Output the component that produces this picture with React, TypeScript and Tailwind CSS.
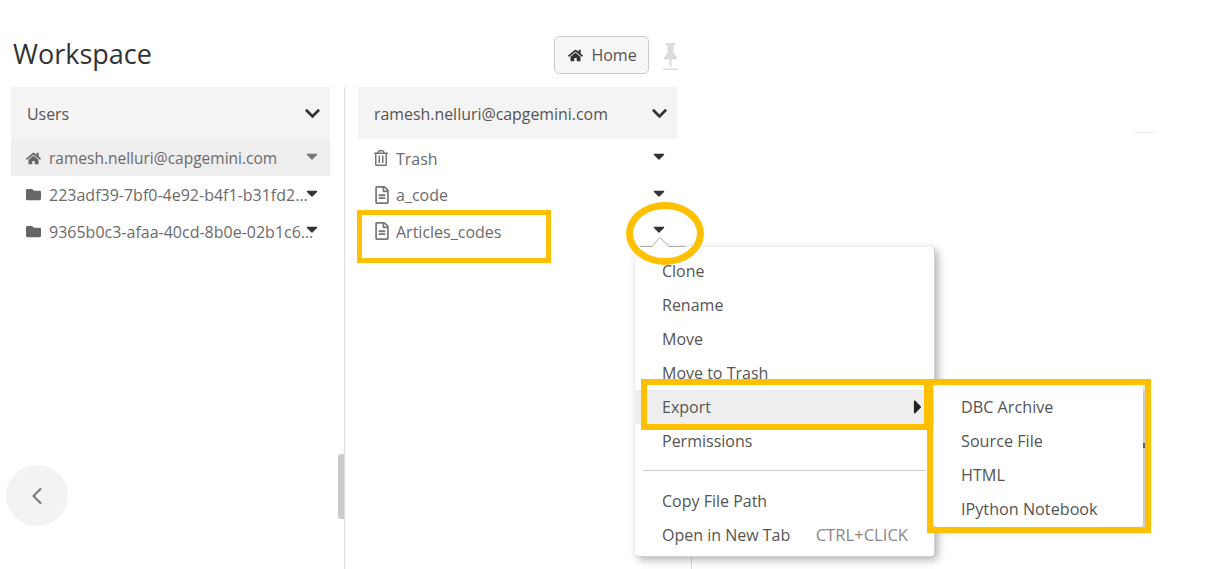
import { ChevronLeft } from "lucide-react";
import {
  FaCaretDown,
  FaCaretRight,
  FaChevronDown,
  FaFolder,
  FaHome,
  FaRegFileAlt,
  FaRegTrashAlt,
} from "react-icons/fa";

function PanelHeader({ label }: { label: string }) {
  return (
    <div className="flex h-[52px] items-center justify-between bg-[#f4f4f4] pl-4 pr-[9px] text-[15.9px] text-[#555]">
      <span className="mt-[3px]">{label}</span>
      <FaChevronDown size={17} className="text-[#333]" />
    </div>
  );
}

function TreeRow({
  icon,
  label,
  selected,
  small,
  caretClass = "text-[#333]",
}: {
  icon: React.ReactNode;
  label: string;
  selected?: boolean;
  small?: boolean;
  caretClass?: string;
}) {
  return (
    <div
      className={`relative flex h-[36.5px] items-center pl-[15px] pr-[14px] text-[#6b6b6b] ${
        selected ? "bg-[#eeeeee]" : ""
      } ${small ? "text-[15.5px]" : "text-[16px]"}`}
    >
      <span className="mt-[2px] flex w-[23px] shrink-0 items-center">{icon}</span>
      <span className="mt-[3px] min-w-0 flex-1 truncate">{label}</span>
      <FaCaretDown size={18} className={`absolute right-[9px] top-[8px] ${caretClass}`} />
    </div>
  );
}

function MenuItem({ label, hint, active }: { label: string; hint?: string; active?: boolean }) {
  return (
    <div
      className={`flex h-[34px] items-center justify-between pl-[27px] pr-[26px] ${
        active ? "bg-[#eeeeee]" : ""
      }`}
    >
      <span>{label}</span>
      {hint && <span className="text-[16.6px] text-[#888]">{hint}</span>}
    </div>
  );
}

export default function App() {
  return (
    <div className="relative h-[569px] w-[1230px] overflow-hidden bg-white font-['Open_Sans',sans-serif] text-[#555]">
      <header className="flex h-[87px] w-[678px] items-start justify-between pl-[13px]">
        <h1 className="mt-[34px] text-[27px] leading-[40px] text-[#333]">Workspace</h1>
        <div className="mt-[36px] flex items-start gap-[14px]">
          <button className="flex h-[38px] w-[95px] items-center justify-center gap-2 rounded-[5px] border border-[#ccc] bg-[#f6f6f6] pl-[2px] text-[16px] text-[#555]">
            <FaHome size={15} className="text-[#333]" />
            Home
          </button>
          <svg width="15" height="28" viewBox="0 0 15 28" className="mt-[7px] text-[#dcdcdc]" fill="currentColor">
            <path d="M3 0H12V2.5H10.5V10L14 14.5V16.5H8.5V24H6.5V16.5H1V14.5L4.5 10V2.5H3Z" />
            <rect x="0" y="25.5" width="15" height="1.5" />
          </svg>
        </div>
      </header>

      <main className="flex h-[482px] pl-[11px]">
        <section className="w-[319px]">
          <PanelHeader label="Users" />
          <TreeRow
            selected
            small
            icon={<FaHome size={15} className="text-[#666]" />}
            label="ramesh.nelluri@capgemini.com"
            caretClass="text-[#777]"
          />
          <TreeRow icon={<FaFolder size={15} className="text-[#666]" />} label="223adf39-7bf0-4e92-b4f1-b31fd2b1c6d1" />
          <TreeRow icon={<FaFolder size={15} className="text-[#666]" />} label="9365b0c3-afaa-40cd-8b0e-02b1c6a3d9f7" />
        </section>

        <div className="relative ml-[14px] w-[1px] bg-[#ddd]">
          <div className="absolute left-[-6px] top-[367px] h-[65px] w-[6px] rounded-l-[3px] bg-[#cccccc]" />
        </div>

        <section className="ml-[13px] w-[319px]">
          <PanelHeader label="ramesh.nelluri@capgemini.com" />
          <TreeRow icon={<FaRegTrashAlt size={16} className="text-[#777]" />} label="Trash" />
          <TreeRow icon={<FaRegFileAlt size={18} className="text-[#777]" />} label="a_code" />
          <TreeRow icon={<FaRegFileAlt size={18} className="text-[#777]" />} label="Articles_codes" />
        </section>
      </main>

      {/* collapse button */}
      <button className="absolute left-[6px] top-[465px] flex h-[61px] w-[62px] items-center justify-center rounded-full bg-[#f3f3f3] text-[#777]">
        <ChevronLeft size={28} strokeWidth={1.75} />
      </button>

      {/* bits of the page showing around the menus */}
      <div className="absolute left-[691px] top-[540px] h-[29px] w-[1px] bg-[#ddd]" />
      <div className="absolute left-[1134px] top-[132px] h-[1px] w-[23px] bg-[#eeeeee]" />
      <div className="absolute left-[1143px] top-[443px] h-[5px] w-[2px] bg-[#777]" />

      {/* context menu */}
      <div className="absolute left-[635px] top-[247px] h-[310px] w-[300px] rounded-[4px] border-r border-b border-[#cfcfcf] bg-white pt-[7px] text-[16px] text-[#555] shadow-[3px_3px_8px_rgba(0,0,0,0.3)]">
        <MenuItem label="Clone" />
        <MenuItem label="Rename" />
        <MenuItem label="Move" />
        <MenuItem label="Move to Trash" />
        <div className="relative">
          <MenuItem label="Export" active />
          <FaCaretRight size={22} className="absolute right-[5px] top-[6px] text-[#222]" />
        </div>
        <MenuItem label="Permissions" />
        <div className="mx-[8px] mb-[13px] mt-[12px] h-[1px] bg-[#ccc]" />
        <MenuItem label="Copy File Path" />
        <MenuItem label="Open in New Tab" hint="CTRL+CLICK" />
      </div>

      {/* submenu */}
      <div className="absolute left-[934px] top-[385px] h-[142px] w-[209px] rounded-[3px] bg-white pt-[5px] text-[16.2px] text-[#555] shadow-[3px_3px_8px_rgba(0,0,0,0.3)]">
        <MenuItem label="DBC Archive" />
        <MenuItem label="Source File" />
        <MenuItem label="HTML" />
        <MenuItem label="IPython Notebook" />
      </div>

      {/* menu pointer notch */}
      <svg className="absolute left-[630px] top-[232px]" width="60" height="20" viewBox="0 0 60 20" fill="#fff">
        <path d="M10 14.5H22L30 5.5L39 14.5H56" stroke="#aaa" strokeWidth="1" />
      </svg>

      {/* yellow annotations */}
      <div className="absolute left-[357px] top-[210px] h-[53px] w-[194px] border-[5px] border-[#ffc000]" />
      <div className="absolute left-[626px] top-[202px] h-[63px] w-[78px] rounded-[50%] border-[7px] border-[#ffc000]" />
      <div className="absolute left-[641px] top-[379px] h-[51px] w-[289px] border-[6px] border-[#ffc000]" />
      <div className="absolute left-[927px] top-[379px] h-[154px] w-[224px] border-[6px] border-[#ffc000]" />
    </div>
  );
}
